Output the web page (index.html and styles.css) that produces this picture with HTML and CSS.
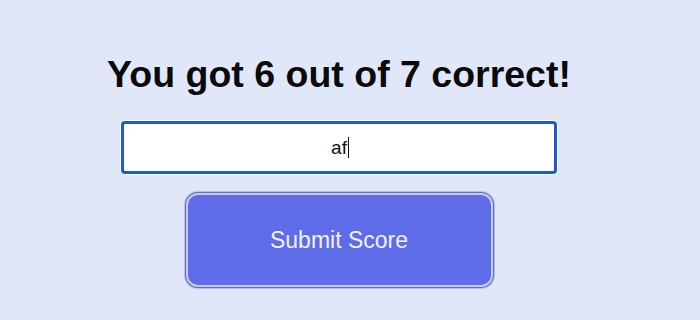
FILE: index.html
```html
<!DOCTYPE html>
<html>
<head>
<meta charset="utf-8">
<link rel="stylesheet" href="styles.css">
</head>
<body>
<main class="page">
  <h1 class="title">You got 6 out of 7 correct!</h1>
  <div class="field"><span class="value">af</span><span class="caret"></span></div>
  <button class="submit" type="button">Submit Score</button>
</main>
</body>
</html>
```
FILE: styles.css
```css
html, body {
  margin: 0;
  padding: 0;
  background: #e0e7f9;
}
body {
  font-family: "Liberation Sans", Arial, Helvetica, sans-serif;
  width: 700px;
  height: 320px;
  overflow: hidden;
}
.page {
  width: 678px;
  display: flex;
  flex-direction: column;
  align-items: center;
}
.title {
  margin: 53px 0 0 0;
  font-size: 37.5px;
  line-height: 42px;
  font-weight: bold;
  color: #0a0a0a;
}
.field {
  margin-top: 26px;
  box-sizing: border-box;
  width: 436px;
  height: 53px;
  background: #fff;
  border: 3px solid #1e5bc6;
  border-radius: 4px;
  box-shadow: 0 0 0 1px #fff;
  display: flex;
  align-items: center;
  justify-content: center;
  font-size: 19px;
  color: #111;
  padding-left: 2px;
}
.caret {
  display: inline-block;
  width: 1px;
  height: 21px;
  background: #111;
  margin-left: 1px;
}
.submit {
  margin-top: 19px;
  box-sizing: border-box;
  width: 307px;
  height: 94px;
  background: #5f6ce9;
  border: 2px solid #c9cdf0;
  border-radius: 12px;
  box-shadow: 0 0 0 1px #5a66e2, 0 0 1px 2px rgba(120,120,140,0.35);
  color: #f1f2fb;
  font-family: "Liberation Sans", Arial, Helvetica, sans-serif;
  font-size: 23px;
  padding: 0;
}
```
